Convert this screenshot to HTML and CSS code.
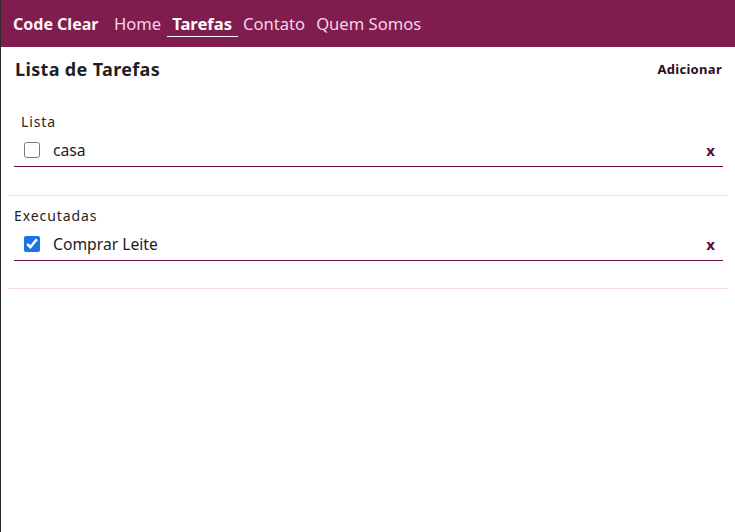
FILE: index.html
```html
<!DOCTYPE html>
<html lang="pt">
<head>
<meta charset="utf-8">
<title>Code Clear - Tarefas</title>
<link rel="stylesheet" href="styles.css">
</head>
<body>
<div class="app">
  <nav class="navbar">
    <span class="brand">Code Clear</span>
    <a class="nav-link">Home</a>
    <a class="nav-link active">Tarefas</a>
    <a class="nav-link">Contato</a>
    <a class="nav-link">Quem Somos</a>
  </nav>
  <main class="content">
    <div class="header">
      <h1 class="title">Lista de Tarefas</h1>
      <a class="add">Adicionar</a>
    </div>
    <section class="group group-lista">
      <div class="group-label label-indent">Lista</div>
      <div class="task">
        <input type="checkbox" class="check">
        <span class="task-text">casa</span>
        <span class="remove">x</span>
      </div>
    </section>
    <hr class="sep">
    <section class="group group-exec">
      <div class="group-label">Executadas</div>
      <div class="task">
        <input type="checkbox" class="check" checked>
        <span class="task-text">Comprar Leite</span>
        <span class="remove">x</span>
      </div>
    </section>
    <hr class="sep">
  </main>
</div>
</body>
</html>
```
FILE: styles.css
```css
* { box-sizing: border-box; }
html, body { margin: 0; padding: 0; background: #fff; }
body {
  font-family: "Noto Sans", "Open Sans", sans-serif;
  color: #212529;
}
.app {
  min-height: 100vh;
  border-left: 1px solid #2a2a2a;
}
.navbar {
  height: 47px;
  background: #7f1d4e;
  display: flex;
  align-items: center;
  padding-left: 12px;
}
.brand {
  color: #fff3fa;
  font-weight: 700;
  font-size: 16px;
  margin-right: 10px;
}
.nav-link {
  color: #f6d3e8;
  font-size: 16.6px;
  padding: 2px 5.5px 1px;
  border-bottom: 1px solid transparent;
}
.nav-link.active {
  color: #fff;
  font-weight: 700;
  border-bottom-color: #fff;
}
.content {
  padding: 0 7px;
}
.header {
  display: flex;
  justify-content: space-between;
  align-items: center;
  height: 45px;
  padding: 0 6px 1px 7px;
}
.title {
  margin: 0;
  font-size: 18px;
  font-weight: 700;
  letter-spacing: 0.35px;
  color: #1e1e24;
}
.add {
  font-size: 13px;
  font-weight: 700;
  color: #2a0c1e;
  letter-spacing: 0.3px;
}
.group {
  padding: 0 5px 0 6px;
}
.group-lista { padding-top: 20px; padding-bottom: 28px; }
.group-exec { padding-top: 10px; padding-bottom: 27px; }
.group-label {
  font-size: 14px;
  line-height: 19px;
  color: #2a2320;
  letter-spacing: 0.9px;
}
.label-indent { padding-left: 7px; }
.task {
  display: flex;
  align-items: center;
  height: 32px;
  padding: 0 8px 2px 10px;
  border-bottom: 1px solid #6a0a45;
  margin-top: 4px;
}
.check {
  width: 16px;
  height: 16px;
  margin: 0 13px 0 0;
  accent-color: #1a73e8;
}
.task-text {
  flex: 1;
  font-size: 15.7px;
  color: #1c1c28;
}
.remove {
  font-size: 15px;
  font-weight: 700;
  color: #5a0a3a;
}
.sep {
  margin: 0;
  border: 0;
  border-top: 1px solid #fcd6ea;
}
```
